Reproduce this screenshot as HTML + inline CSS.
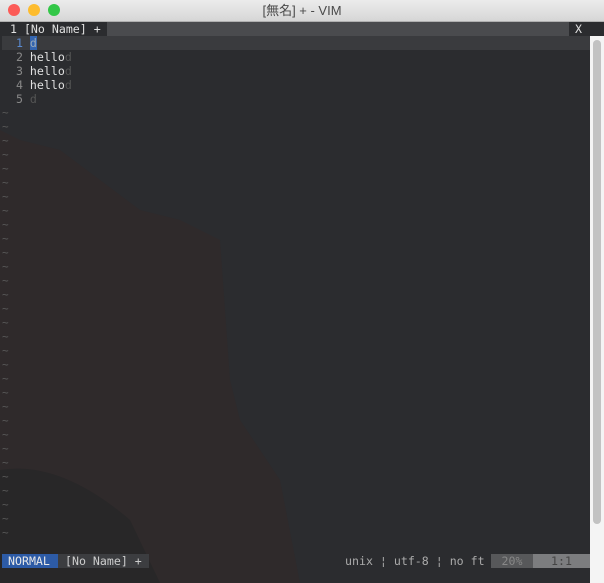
<!DOCTYPE html>
<html><head><meta charset="utf-8"><style>
html,body{margin:0;padding:0;width:604px;height:583px;overflow:hidden;background:#2b2c2f;font-family:"DejaVu Sans Mono","Liberation Mono",monospace;font-size:11.6px}
.title{position:absolute;left:0;top:0;width:604px;height:21px;background:linear-gradient(#ececec,#d6d6d6);border-bottom:1px solid #b0b0b0;font-family:"Liberation Sans","Noto Sans CJK JP",sans-serif;font-size:13px;color:#4a4a4a;text-align:center;line-height:21px}
.dot{position:absolute;top:4px;width:12px;height:12px;border-radius:50%}
.row{position:absolute;left:0;height:14px;line-height:14px;white-space:pre;color:#e0e0e0;letter-spacing:0}
.t{position:absolute;left:2px;color:#5a5a5a;font-size:11px;line-height:14px}
</style></head><body>
<svg style="position:absolute;left:0;top:0" width="604" height="583">
<path d="M0 130 L20 140 L60 150 L100 180 L140 210 L180 220 L220 240 L230 380 L240 420 L280 480 L300 583 L0 583 Z" fill="#3a2420" opacity="0.25"/>
<path d="M0 470 Q60 460 130 520 L160 583 L0 583 Z" fill="#222326" opacity="0.5"/>
</svg>
<div class="title"><span class="dot" style="left:8px;background:#fc5b57"></span><span class="dot" style="left:28px;background:#fdbc2e"></span><span class="dot" style="left:48px;background:#33c748"></span>[無名] + - VIM</div>
<div class="row" style="top:22px;width:604px;background:#2b2c2f"><span style="position:absolute;left:3px;color:#e0e0e0"> 1 [No Name] +</span><span style="position:absolute;left:107px;width:462px;height:14px;background:#4a4b4e"></span><span style="position:absolute;left:575px;color:#e0e0e0">X</span></div>
<div class="row" style="top:36px;width:590px;background:#3a3b3e;left:2px"><span style="color:#5a8ad0">  1 </span><span style="background:#3465b0;color:#9ab">d</span></div>
<div class="row" style="top:50px;left:2px"><span style="color:#888">  2 </span>hello<span style="color:#555">d</span></div>
<div class="row" style="top:64px;left:2px"><span style="color:#888">  3 </span>hello<span style="color:#555">d</span></div>
<div class="row" style="top:78px;left:2px"><span style="color:#888">  4 </span>hello<span style="color:#555">d</span></div>
<div class="row" style="top:92px;left:2px"><span style="color:#888">  5 </span><span style="color:#555">d</span></div>
<div id="tl"></div>
<div style="position:absolute;left:590px;top:36px;width:14px;height:547px;background:#f4f4f4"><div style="position:absolute;left:3px;top:4px;width:8px;height:484px;border-radius:4px;background:#c2c2c2"></div></div>
<div class="row" style="top:540px;width:590px;color:#bbb">
<span style="position:absolute;left:2px;width:56px;background:#2d5ba6;color:#e8e8e8;padding-left:6px;box-sizing:border-box">NORMAL</span><span style="position:absolute;left:58px;width:91px;background:#3c3d40;color:#ccc;padding-left:7px;box-sizing:border-box">[No Name] +</span><span style="position:absolute;left:345px;color:#aaa">unix ¦ utf-8 ¦ no ft</span><span style="position:absolute;left:491px;width:42px;height:14px;background:#57585a;color:#888;text-align:center">20%</span><span style="position:absolute;left:533px;width:57px;height:14px;background:#7c7d7f;color:#444;text-align:center">1:1</span></div>
<script>
var h='';for(var y=106;y<540;y+=14)h+='<div class="t" style="top:'+y+'px">~</div>';document.getElementById('tl').innerHTML=h;
</script>
</body></html>
